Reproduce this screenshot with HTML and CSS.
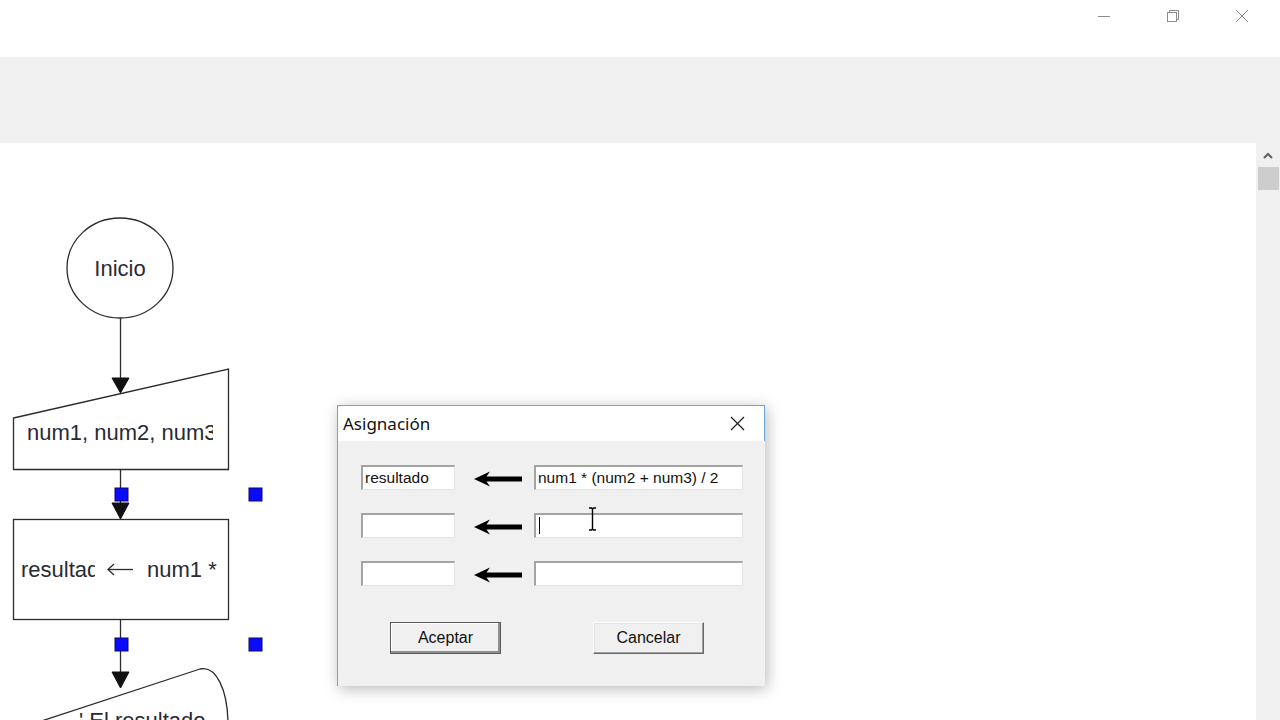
FILE: index.html
```html
<!DOCTYPE html>
<html lang="es">
<head>
    <meta charset="UTF-8">
    <meta name="viewport" content="width=device-width, initial-scale=1.0">
    <title>PSeInt - Diagrama de flujo</title>
    <link rel="stylesheet" href="styles.css">
</head>
<body>
    <div class="window">
        <div class="titlebar">
            <span class="win-btn" title="Minimizar">
                <svg width="14" height="14" viewBox="0 0 14 14"><line x1="1" y1="7.5" x2="13" y2="7.5"/></svg>
            </span>
            <span class="win-btn" title="Restaurar">
                <svg width="14" height="14" viewBox="0 0 14 14"><rect x="1.5" y="3.5" width="9" height="9"/><polyline points="3.5,3.5 3.5,1.5 12.5,1.5 12.5,10.5 10.5,10.5"/></svg>
            </span>
            <span class="win-btn" title="Cerrar">
                <svg width="14" height="14" viewBox="0 0 14 14"><line x1="1" y1="1" x2="13" y2="13"/><line x1="13" y1="1" x2="1" y2="13"/></svg>
            </span>
        </div>

        <div class="toolbar"></div>

        <div class="workspace">
            <div class="canvas">
                <!-- diagrama: coordenadas de ventana, desplazado por la barra -->
                <svg class="diagram" width="1256" height="577" viewBox="0 0 1256 577">
                    <defs>
                        <clipPath id="clip-leer"><rect x="14" y="400" width="199" height="60"/></clipPath>
                        <clipPath id="clip-var"><rect x="14" y="540" width="81" height="50"/></clipPath>
                        <clipPath id="clip-expr"><rect x="147" y="540" width="75" height="50"/></clipPath>
                    </defs>
                    <g transform="translate(0,-143)" class="flow">
                        <!-- Inicio -->
                        <ellipse cx="120" cy="268" rx="53" ry="50"/>
                        <text x="120" y="276" text-anchor="middle">Inicio</text>
                        <line x1="120.5" y1="318" x2="120.5" y2="380"/>
                        <polygon class="head" points="112,378 129,378 120.5,393"/>

                        <!-- Leer -->
                        <polygon points="13.5,418 228.5,369 228.5,469.5 13.5,469.5"/>
                        <text x="27" y="440" clip-path="url(#clip-leer)">num1, num2, num3</text>

                        <line x1="120.5" y1="469.5" x2="120.5" y2="506"/>
                        <rect class="handle" x="115" y="488" width="13" height="13"/>
                        <rect class="handle" x="249" y="488" width="13" height="13"/>
                        <polygon class="head" points="112,503 129,503 120.5,519"/>

                        <!-- Asignar -->
                        <rect x="13.5" y="519.5" width="215" height="100"/>
                        <text x="21" y="577" clip-path="url(#clip-var)">resultado</text>
                        <line x1="108" y1="569.5" x2="133" y2="569.5"/>
                        <polyline points="114,564 108,569.5 114,575"/>
                        <text x="147" y="577" clip-path="url(#clip-expr)">num1 * (num2 + num3) / 2</text>

                        <line x1="120.5" y1="619.5" x2="120.5" y2="674"/>
                        <rect class="handle" x="115" y="638" width="13" height="13"/>
                        <rect class="handle" x="249" y="638" width="13" height="13"/>
                        <polygon class="head" points="112,672 129,672 120.5,688"/>

                        <!-- Escribir -->
                        <path d="M 8 732 L 200 669 C 216 665 228 690 228 725"/>
                        <text x="79" y="728">' El resultado</text>
                    </g>
                </svg>

                <div class="dialog">
                    <div class="dialog-title">
                        <span>Asignación</span>
                        <span class="dialog-close">
                            <svg width="15" height="15" viewBox="0 0 15 15"><line x1="1" y1="1" x2="14" y2="14"/><line x1="14" y1="1" x2="1" y2="14"/></svg>
                        </span>
                    </div>
                    <div class="dialog-body">
                        <div class="assign-row">
                            <div class="field field-var">resultado</div>
                            <svg class="assign-arrow" width="48" height="16" viewBox="0 0 48 16"><path d="M0 8 L16 0.5 L12.5 5.5 L48 5.5 L48 10.5 L12.5 10.5 L16 15.5 Z"/></svg>
                            <div class="field field-expr">num1 * (num2 + num3) / 2</div>
                        </div>
                        <div class="assign-row">
                            <div class="field field-var"></div>
                            <svg class="assign-arrow" width="48" height="16" viewBox="0 0 48 16"><path d="M0 8 L16 0.5 L12.5 5.5 L48 5.5 L48 10.5 L12.5 10.5 L16 15.5 Z"/></svg>
                            <div class="field field-expr"><span class="caret"></span></div>
                        </div>
                        <div class="assign-row">
                            <div class="field field-var"></div>
                            <svg class="assign-arrow" width="48" height="16" viewBox="0 0 48 16"><path d="M0 8 L16 0.5 L12.5 5.5 L48 5.5 L48 10.5 L12.5 10.5 L16 15.5 Z"/></svg>
                            <div class="field field-expr"></div>
                        </div>
                        <div class="button-row">
                            <button class="btn btn-default">Aceptar</button>
                            <button class="btn">Cancelar</button>
                        </div>
                    </div>
                    <!-- puntero del raton sobre el campo -->
                    <svg class="ibeam" width="9" height="24" viewBox="0 0 9 24">
                        <path d="M1 1 H3.5 L4.5 2 L5.5 1 H8 M4.5 2 V22 M1 23 H3.5 L4.5 22 L5.5 23 H8"/>
                    </svg>
                </div>
            </div>

            <div class="scrollbar">
                <div class="scroll-up">
                    <svg width="10" height="7" viewBox="0 0 10 7"><polyline points="1,6 5,2 9,6"/></svg>
                </div>
                <div class="scroll-thumb"></div>
            </div>
        </div>
    </div>
</body>
</html>
```

FILE: styles.css
```css
html, body {
    margin: 0;
    padding: 0;
}
body {
    width: 1280px;
    height: 720px;
    overflow: hidden;
    background: #ffffff;
    font-family: "Liberation Sans", Arial, sans-serif;
}
.window {
    display: flex;
    flex-direction: column;
    height: 720px;
}
.titlebar {
    height: 57px;
    background: #ffffff;
    display: flex;
    justify-content: flex-end;
    align-items: flex-start;
    padding-right: 4px;
    box-sizing: border-box;
}
.win-btn {
    width: 69px;
    height: 32px;
    display: flex;
    align-items: center;
    justify-content: center;
}
.win-btn svg {
    fill: none;
    stroke: #8c8c8c;
    stroke-width: 1;
}
.toolbar {
    height: 86px;
    background: #f0f0f0;
}
.workspace {
    flex: 1;
    display: flex;
}
.canvas {
    flex: 1;
    position: relative;
    background: #ffffff;
    overflow: hidden;
}
.diagram {
    position: absolute;
    left: 0;
    top: 0;
}
.flow ellipse,
.flow rect,
.flow polygon,
.flow path,
.flow polyline,
.flow line {
    fill: none;
    stroke: #2b2b2b;
    stroke-width: 1.3;
}
.flow .head {
    fill: #111111;
    stroke: #111111;
    stroke-width: 1;
}
.flow .handle {
    fill: #0a0aff;
    stroke: #0a0a60;
    stroke-width: 1;
}
.flow text {
    font-family: "Liberation Sans", Arial, sans-serif;
    font-size: 22px;
    fill: #2a2a35;
}

/* ventana de dialogo */
.dialog {
    position: absolute;
    left: 337px;
    top: 262px;
    width: 428px;
    height: 281px;
    display: flex;
    flex-direction: column;
    box-shadow: 2px 3px 14px rgba(0, 0, 0, 0.28);
    background: #f0f0f0;
}
.dialog-title {
    height: 36px;
    background: #ffffff;
    border: 1px solid #6ea3d8;
    border-bottom: none;
    box-sizing: border-box;
    display: flex;
    align-items: center;
    justify-content: space-between;
    padding: 0 19px 0 5px;
    font-family: "Noto Sans", "Open Sans", sans-serif;
    font-size: 17px;
    color: #111111;
}
.dialog-close svg {
    display: block;
    fill: none;
    stroke: #222222;
    stroke-width: 1.2;
}
.dialog-body {
    flex: 1;
    border-left: 1px solid #6ea3d8;
    padding: 24px 0 0 23px;
    display: flex;
    flex-direction: column;
    gap: 23px;
}
.assign-row {
    display: flex;
    align-items: center;
    height: 25px;
}
.field {
    height: 25px;
    box-sizing: border-box;
    background: #ffffff;
    border-top: 2px solid #a3a3a3;
    border-left: 2px solid #a3a3a3;
    border-right: 1px solid #e4e4e4;
    border-bottom: 1px solid #e4e4e4;
    font-size: 15.5px;
    line-height: 21px;
    padding-left: 2px;
    color: #111111;
    white-space: nowrap;
    overflow: hidden;
}
.field-var {
    width: 94px;
}
.field-expr {
    width: 209px;
}
.assign-arrow {
    margin: 2px 12px 0 19px;
    fill: #000000;
}
.caret {
    display: inline-block;
    width: 1px;
    height: 17px;
    margin: 2px 0 0 1px;
    background: #000000;
    vertical-align: top;
}
.button-row {
    display: flex;
    gap: 92px;
    padding-left: 29px;
    margin-top: 13px;
}
.btn {
    width: 111px;
    height: 32px;
    background: #f0f0f0;
    font-family: "Liberation Sans", Arial, sans-serif;
    font-size: 16px;
    color: #111111;
    padding: 0;
    border-top: 1px solid #ffffff;
    border-left: 1px solid #ffffff;
    border-right: 1px solid #6a6a6a;
    border-bottom: 1px solid #6a6a6a;
    box-shadow: inset -1px -1px 0 #a0a0a0, inset 1px 1px 0 #e3e3e3;
}
.btn-default {
    border: 1px solid #5a5a5a;
    box-shadow: inset -2px -2px 0 #8f8f8f, inset 1px 1px 0 #ffffff;
}
.ibeam {
    position: absolute;
    left: 251px;
    top: 102px;
    fill: none;
    stroke: #000000;
    stroke-width: 1.4;
}

/* barra de desplazamiento vertical */
.scrollbar {
    width: 24px;
    background: #f0f0f0;
    display: flex;
    flex-direction: column;
    align-items: center;
}
.scroll-up {
    height: 24px;
    display: flex;
    align-items: center;
    justify-content: center;
}
.scroll-up svg {
    fill: none;
    stroke: #606060;
    stroke-width: 2;
}
.scroll-thumb {
    width: 21px;
    height: 23px;
    background: #cdcdcd;
}
```
